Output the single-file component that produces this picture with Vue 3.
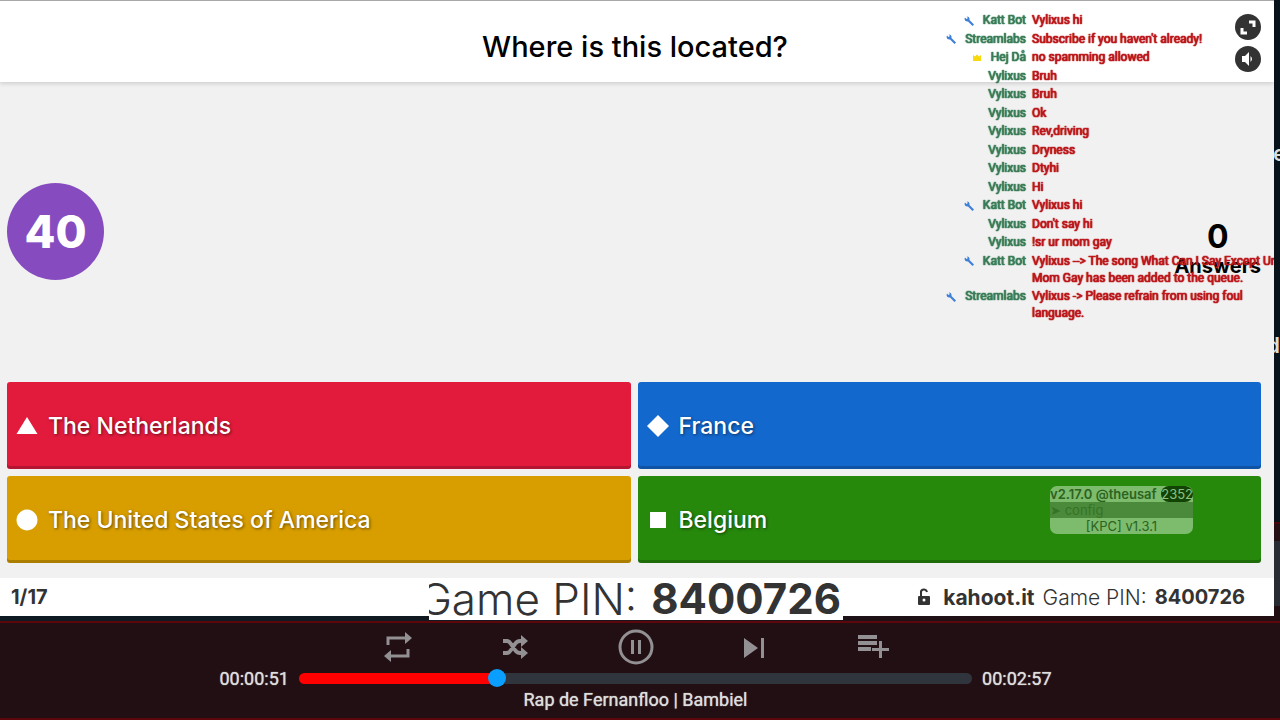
<script setup>
const chat = [
  { name: 'Katt Bot', text: 'Vylixus hi', badge: 'mod' },
  { name: 'Streamlabs', text: "Subscribe if you haven't already!", badge: 'mod' },
  { name: 'Hej Då', text: 'no spamming allowed', badge: 'owner' },
  { name: 'Vylixus', text: 'Bruh' },
  { name: 'Vylixus', text: 'Bruh' },
  { name: 'Vylixus', text: 'Ok' },
  { name: 'Vylixus', text: 'Rev,driving' },
  { name: 'Vylixus', text: 'Dryness' },
  { name: 'Vylixus', text: 'Dtyhi' },
  { name: 'Vylixus', text: 'Hi' },
  { name: 'Katt Bot', text: 'Vylixus hi', badge: 'mod' },
  { name: 'Vylixus', text: "Don't say hi" },
  { name: 'Vylixus', text: '!sr ur mom gay' },
  { name: 'Katt Bot', text: 'Vylixus --> The song What Can I Say Except Ur Mom Gay has been added to the queue.', badge: 'mod' },
  { name: 'Streamlabs', text: 'Vylixus -> Please refrain from using foul language.', badge: 'mod' }
]
const answers = [
  { text: 'The Netherlands', tone: 'red', shape: 'M16 7 L26.500 24 H5.500 Z' },
  { text: 'France', tone: 'blue', shape: 'M16 5 L27 16 L16 27 L5 16 Z' },
  { text: 'The United States of America', tone: 'gold', shape: 'M16 5.500 A10.500 10.500 0 1 1 15.990 5.500 Z' },
  { text: 'Belgium', tone: 'green', shape: 'M8 8 H24 V24 H8 Z' }
]
</script>

<template>
  <div class="screen">
    <div class="stage">
      <main class="game">
        <header class="question">
          <h1>Where is this located?</h1>
          <div class="tools">
            <button class="tool" aria-label="Full screen">
              <svg viewBox="0 0 26 26"><path d="M14 8h5v5M12 19H7v-5" fill="none" stroke="#fff" stroke-width="3" /></svg>
            </button>
            <button class="tool" aria-label="Sound">
              <svg viewBox="0 0 26 26"><path d="M7 10h3l4-4v14l-4-4H7z" fill="#fff" /><path d="M15.500 10q3 3 0 6z" fill="#fff" /></svg>
            </button>
          </div>
        </header>
        <section class="board">
          <div class="timer">40</div>
          <div class="count"><strong>0</strong><span>Answers</span></div>
        </section>
        <section class="answers">
          <button v-for="a in answers" :key="a.text" class="answer" :class="a.tone">
            <svg viewBox="0 0 32 32"><path :d="a.shape" fill="#fff" /></svg>
            <span>{{ a.text }}</span>
          </button>
          <aside class="plugin">
            <div class="version"><span>v2.17.0 @theusaf</span><mark>2352</mark></div>
            <div class="config">➤ config</div>
            <div class="kpc">[KPC] v1.3.1</div>
          </aside>
        </section>
        <footer class="status">
          <span class="progress">1/17</span>
          <div class="join">
            <svg viewBox="0 0 14 18"><path d="M4 8V5a3 3 0 0 1 6-1" fill="none" stroke="#333" stroke-width="2" /><rect x="1" y="8" width="12" height="9" rx="1" fill="#333" /><circle cx="7" cy="12" r="1.500" fill="#fff" /></svg>
            <b>kahoot.it</b>
            <span class="pin">Game PIN:</span>
            <b class="code">8400726</b>
          </div>
        </footer>
        <div class="bigpin"><span>Game PIN:</span><b>8400726</b></div>
        <ul class="chat">
          <li v-for="(m, i) in chat" :key="i">
            <span class="who">
              <svg v-if="m.badge === 'mod'" viewBox="0 0 12 12"><path d="M2 2.500 3.500 4 4.500 3.500 4.500 2 3.500 1.500Q6 1 6.500 3.500L6.500 5 11 9.500 9.500 11 5 6.500Q2 7 1.500 4Z" fill="#3f7fd8" /></svg>
              <svg v-else-if="m.badge === 'owner'" viewBox="0 0 12 12"><path d="M2 3 4 4.500 6 2.500 8 4.500 10 3V9H2Z" fill="#f8d90f" /></svg>
              {{ m.name }}
            </span>
            <span class="msg">{{ m.text }}</span>
          </li>
        </ul>
      </main>
      <div class="edge"><span class="e1">e</span><span class="e2">d</span></div>
    </div>
    <section class="player">
      <div class="controls">
        <button aria-label="Repeat"><svg viewBox="0 0 32 32"><path d="M6 14V7h18M26 18v7H8" fill="none" stroke="currentColor" stroke-width="3" /><path d="M23 1l7 6-7 6zM9 19l-7 6 7 6z" fill="currentColor" /></svg></button>
        <button aria-label="Shuffle"><svg viewBox="0 0 32 32"><path d="M2 10h4q2 0 4 3l4 6q2 3 5 3h3M2 22h4q2 0 4-3l4-6q2-3 5-3h3" fill="none" stroke="currentColor" stroke-width="4" /><path d="M20 4l7 6-7 6zM20 16l7 6-7 6z" fill="currentColor" /></svg></button>
        <button aria-label="Pause"><svg class="large" viewBox="0 0 36 36"><circle cx="18" cy="18" r="16" fill="none" stroke="currentColor" stroke-width="3" /><path d="M13 11h3v14h-3zM20 11h3v14h-3z" fill="currentColor" /></svg></button>
        <button aria-label="Next"><svg viewBox="0 0 32 32"><path d="M5 7l14 10L5 27zM22 7h3v20h-3z" fill="currentColor" /></svg></button>
        <button aria-label="Add to queue"><svg viewBox="0 0 32 32"><path d="M0 4h19v4H0zM0 10h19v4H0zM0 16h13v4H0zM21 10h3v7h7v3h-7v7h-3v-7h-7v-3h7z" fill="currentColor" /></svg></button>
      </div>
      <div class="timeline">
        <span>00:00:51</span>
        <input type="range" min="0" max="177" value="51" aria-label="Seek" />
        <span>00:02:57</span>
      </div>
      <p class="song">Rap de Fernanfloo | Bambiel</p>
    </section>
  </div>
</template>

<style>
body { margin: 0; background: #210f13; }
</style>

<style scoped>
* { box-sizing: border-box; }
.screen { min-height: 100vh; display: flex; flex-direction: column; background: #210f13; font-family: Inter, "Open Sans", sans-serif; overflow: hidden; }
button { border: 0; padding: 0; font: inherit; }
h1, p, ul { margin: 0; padding: 0; }
.stage { flex: 1; display: flex; background: linear-gradient(90deg, #0e1a22 25%, #210f13 80%); padding-bottom: 5px; }
.game { position: relative; flex: 1; display: flex; flex-direction: column; background: #f1f1f1; border-top: 1px solid #aaa; }
.edge { position: relative; width: 6px; overflow: hidden; background: linear-gradient(#08121b 0 522px, #4c0508 522px 524px, #241014 524px 541px, #292b33 541px 606px, #210f13 606px); color: #ddd; font-size: 22px; font-weight: 600; }
.edge span { position: absolute; right: -6px; }
.e1 { top: 140px; }
.edge .e2 { top: 332px; right: 0; }
.question { position: relative; display: flex; align-items: center; justify-content: center; height: 81px; padding: 10px 4px 0 0; background: #fff; box-shadow: 0 2px 4px #0002; }
h1 { color: #000; font-size: 29px; font-weight: 500; line-height: 36px; }
.tools { position: absolute; top: 13px; right: 13px; display: grid; gap: 6px; }
.tool { width: 26px; height: 26px; border-radius: 50%; background: #333; }
.tool svg { display: block; width: 26px; height: 26px; }
.board { flex: 1; display: flex; align-items: center; justify-content: space-between; padding: 0 13px 2px 7px; }
.timer { width: 97px; height: 97px; border-radius: 50%; display: grid; place-items: center; background: #864cbf; color: #fff; font-size: 45px; font-weight: 800; }
.count { display: grid; justify-items: center; margin-top: 35px; color: #000; font-size: 20px; font-weight: 700; line-height: 24px; }
.count strong { font-size: 32px; font-weight: 700; line-height: 34px; }
.answers { position: relative; display: grid; grid-template-columns: 1fr 1fr; gap: 7px; padding: 0 13px 15px 7px; }
.answer { display: flex; align-items: center; gap: 5px; height: 87px; padding: 0 4px; border-radius: 3px; box-shadow: inset 0 -3px #0003; color: #fff; font-size: 23px; font-weight: 500; text-align: left; text-shadow: 1px 1px 3px #0008; }
.answer svg { width: 32px; height: 32px; }
.red { background: #e21b3c; }
.blue { background: #1368ce; }
.gold { background: #d89e00; }
.green { background: #26890c; }
.plugin { position: absolute; right: 81px; bottom: 44px; width: 143px; border-radius: 7px; overflow: hidden; background: #7dbb6d; color: #2b6320; font-size: 13px; line-height: 16px; }
.version { display: flex; justify-content: space-between; font-weight: 600; white-space: nowrap; }
.version mark { border-radius: 8px; background: #114305; color: #8dc080; font-weight: 400; }
.config { background: #4b8a3a; color: #357326; }
.kpc { text-align: center; }
.status { display: flex; justify-content: space-between; align-items: center; height: 38px; padding: 0 29px 0 11px; background: #fff; color: #333; font-size: 21px; }
.progress, .code { font-size: 20px; }
.progress { font-weight: 700; }
.join { display: flex; align-items: center; gap: 8px; }
.join svg { width: 14px; height: 18px; margin-right: 4px; }
.pin { font-weight: 300; }
b { font-weight: 700; }
.bigpin { position: absolute; left: 429px; bottom: -4px; width: 414px; height: 42px; overflow: hidden; display: flex; justify-content: flex-end; gap: 14px; padding-right: 2px; background: #fff; color: #333; font-size: 44px; font-weight: 300; line-height: 42px; white-space: nowrap; }
.bigpin b { font-size: 42px; }
.chat { position: absolute; top: 11px; right: 0; width: 334px; height: 310px; display: grid; align-content: space-between; list-style: none; font-family: Roboto, sans-serif; font-size: 12px; font-weight: 400; line-height: 17px; }
.chat li { display: grid; grid-template-columns: 86px 1fr; gap: 6px; }
.who { display: flex; justify-content: flex-end; align-items: center; height: 17px; color: #3a7c57; white-space: nowrap; text-shadow: 0 0 1px #3a7c57, 0 0 1px #3a7c57, 0 0 1px #3a7c57; }
.who svg { width: 12px; height: 12px; margin-right: 8px; }
.msg { margin-right: -4px; color: #bb171c; text-shadow: 0 0 1px #bb171c, 0 0 1px #bb171c, 0 0 1px #bb171c; }
.player { height: 99px; padding-right: 9px; border-top: 2px solid #5d070d; border-bottom: 2px solid #5d070d; background: #210f13; color: #ddd; font-family: Roboto, sans-serif; font-size: 18px; }
.controls { display: flex; justify-content: center; align-items: center; gap: 83px; height: 48px; }
.controls button { width: 36px; height: 36px; display: grid; place-items: center; background: none; color: #929092; }
.controls svg { width: 32px; height: 32px; }
.controls .large { width: 36px; height: 36px; }
.timeline { display: flex; align-items: center; gap: 10px; width: 832px; max-width: 100%; margin: 0 auto; height: 14px; }
input { flex: 1; min-width: 0; appearance: none; height: 11px; margin: 0; border-radius: 6px; background: linear-gradient(90deg, #f00 29%, #30353d 29%); }
input::-webkit-slider-thumb { appearance: none; width: 18px; height: 18px; border-radius: 50%; background: #0a9fff; }
.song { text-align: center; line-height: 30px; }
.timeline, .song { text-shadow: 0 0 1px #ddd; }
</style>
